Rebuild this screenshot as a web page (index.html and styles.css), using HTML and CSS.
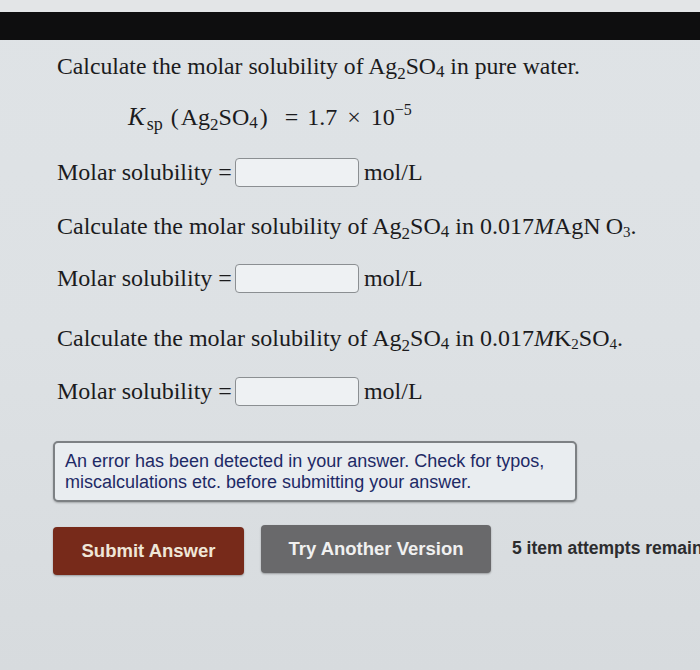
FILE: index.html
```html
<!DOCTYPE html>
<html>
<head>
<meta charset="utf-8">
<link rel="stylesheet" href="styles.css">
</head>
<body>
<div class="strip"></div>
<div class="bar"></div>
<div class="content">
  <div class="row q q1">Calculate the molar solubility of Ag<sub>2</sub>SO<span class="s4">4</span> in pure water.</div>
  <div class="row q ksp"><i>K</i><sub class="sp">sp</sub> <span class="paren">(</span>Ag<sub>2</sub>SO<span class="s4">4</span><span class="paren">)</span> <span class="eq">=</span> 1.7 <span class="times">×</span> 10<sup>−5</sup></div>
  <div class="row ms ms1">Molar solubility <span class="eqs">=</span><span class="box"></span><span class="unit">mol/L</span></div>
  <div class="row q q2">Calculate the molar solubility of Ag<sub>2</sub>SO<span class="s4">4</span> in 0.017<i>M</i>AgN<span class="gap"></span>O<sub class="small">3</sub>.</div>
  <div class="row ms ms2">Molar solubility <span class="eqs">=</span><span class="box"></span><span class="unit">mol/L</span></div>
  <div class="row q q3">Calculate the molar solubility of Ag<sub>2</sub>SO<span class="s4">4</span> in 0.017<i>M</i>K<sub class="small">2</sub>SO<sub class="small">4</sub>.</div>
  <div class="row ms ms3">Molar solubility <span class="eqs">=</span><span class="box"></span><span class="unit">mol/L</span></div>
  <div class="error">An error has been detected in your answer. Check for typos, miscalculations etc. before submitting your answer.</div>
  <div class="actions">
    <button class="btn submit">Submit Answer</button>
    <button class="btn another">Try Another Version</button>
    <span class="attempts">5 item attempts remaining</span>
  </div>
</div>
</body>
</html>
```
FILE: styles.css
```css
html, body {
  margin: 0;
  padding: 0;
}
body {
  width: 700px;
  height: 670px;
  overflow: hidden;
  background: linear-gradient(180deg, #dfe3e6 0%, #dde1e4 50%, #d7dbde 100%);
  font-family: "Liberation Serif", "Times New Roman", serif;
  color: #1b1b1d;
}
.strip {
  height: 12px;
  background: #e3e5e7;
}
.bar {
  height: 28px;
  background: #0e0e0f;
}
.content {
  padding-left: 57px;
}
.row {
  display: block;
  white-space: nowrap;
  font-size: 24px;
  line-height: 30px;
  height: 30px;
}
.q1 { font-size: 23.7px; }
.row sub {
  font-size: 17px;
  position: relative;
  top: 5px;
  vertical-align: baseline;
  line-height: 0;
}
.row sub.sp {
  font-size: 18px;
  margin-left: 2px;
}
.row sub.small {
  font-size: 15px;
  top: 3px;
}
.s4 {
  font-size: 17px;
  position: relative;
  top: 3px;
}
.row sup {
  font-size: 16px;
  position: relative;
  top: -10px;
  vertical-align: baseline;
  line-height: 0;
}
.q1 { margin-top: 11px; }
.ksp { margin-top: 21px; margin-left: 71px; }
.ksp i { font-size: 25px; }
.ksp .paren { margin: 0 2px; }
.ksp .eq { margin: 0 3px 0 9px; }
.ksp .times { margin: 0 4px; }
.ms { height: 32px; line-height: 32px; }
.ms1 { margin-top: 24px; }
.q2 { margin-top: 23px; }
.ms2 { margin-top: 21px; }
.q3 { margin-top: 29px; }
.ms3 { margin-top: 22px; }
.gap { display: inline-block; width: 5px; }
.box {
  display: inline-block;
  vertical-align: middle;
  width: 122px;
  height: 27px;
  margin-left: 3px;
  margin-top: -4px;
  border: 1.5px solid #8b8f92;
  border-radius: 4px;
  background: #eef1f3;
}
.unit { margin-left: 5px; }
.error {
  margin-top: 34px;
  margin-left: -4px;
  width: 500px;
  padding: 8px 10px 7px 10px;
  border: 2px solid #7d8184;
  border-radius: 5px;
  background: #e9edf0;
  box-shadow: 0 1px 2px rgba(0,0,0,0.25);
  font-family: "Liberation Sans", Arial, sans-serif;
  font-size: 18px;
  line-height: 21px;
  color: #1e2a66;
}
.actions {
  margin-top: 25px;
  margin-left: -4px;
  display: flex;
  align-items: center;
}
.btn {
  flex-shrink: 0;
  border: none;
  border-radius: 4px;
  font-family: "Liberation Sans", Arial, sans-serif;
  font-weight: bold;
  font-size: 18.5px;
  height: 48px;
  padding: 0;
}
.submit {
  width: 191px;
  background: #772a1a;
  color: #efe6d8;
  box-shadow: 0 1px 2px rgba(0,0,0,0.3);
}
.another {
  width: 230px;
  margin-left: 17px;
  margin-top: -4px;
  background: #69696b;
  color: #f0f0f0;
  box-shadow: 0 1px 2px rgba(0,0,0,0.3);
}
.attempts {
  flex-shrink: 0;
  margin-left: 21px;
  font-family: "Liberation Sans", Arial, sans-serif;
  font-weight: bold;
  font-size: 17.5px;
  color: #2c2c2e;
  white-space: nowrap;
  margin-top: -6px;
}
```
